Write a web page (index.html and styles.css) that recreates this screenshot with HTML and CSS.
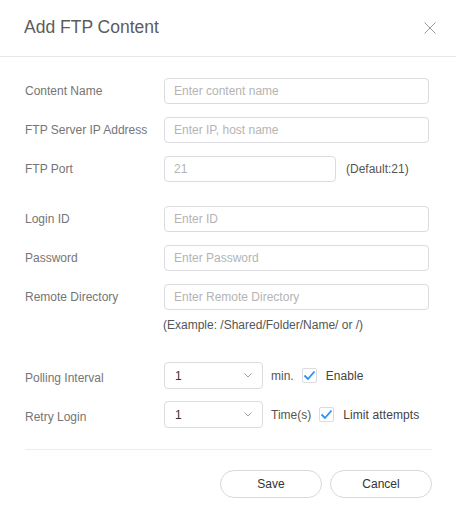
FILE: index.html
```html
<!DOCTYPE html>
<html>
<head>
<meta charset="utf-8">
<link rel="stylesheet" href="styles.css">
</head>
<body>
<div class="dialog">
  <div class="header">
    <div class="title">Add FTP Content</div>
    <svg class="close" width="12" height="12" viewBox="0 0 12 12"><path d="M0.5 0.5 L11.5 11.5 M11.5 0.5 L0.5 11.5" stroke="#9a9a9a" stroke-width="1" fill="none"/></svg>
  </div>
  <div class="form">
    <div class="group">
      <label class="label">Content Name</label>
      <input class="input" placeholder="Enter content name">
      <label class="label">FTP Server IP Address</label>
      <input class="input" placeholder="Enter IP, host name">
      <label class="label">FTP Port</label>
      <div class="inline">
        <input class="input port" placeholder="21">
        <span class="note">(Default:21)</span>
      </div>
    </div>
    <div class="group g2">
      <label class="label">Login ID</label>
      <input class="input" placeholder="Enter ID">
      <label class="label">Password</label>
      <input class="input" placeholder="Enter Password">
      <label class="label">Remote Directory</label>
      <input class="input" placeholder="Enter Remote Directory">
      <span></span>
      <div class="hint">(Example: /Shared/Folder/Name/ or /)</div>
    </div>
    <div class="group g3">
      <label class="label low">Polling Interval</label>
      <div class="inline">
        <div class="select"><span>1</span><svg width="8" height="5" viewBox="0 0 8 5"><path d="M0.5 0.5 L4 4 L7.5 0.5" stroke="#a0a0a0" fill="none" stroke-width="1"/></svg></div>
        <span class="unit">min.</span>
        <span class="check"><svg width="13" height="11" viewBox="0 0 13 11"><path d="M1.5 5.5 L5 9 L11.5 1.5" stroke="#2f8ff5" stroke-width="1.8" fill="none"/></svg></span>
        <span class="cklabel">Enable</span>
      </div>
      <label class="label low">Retry Login</label>
      <div class="inline">
        <div class="select"><span>1</span><svg width="8" height="5" viewBox="0 0 8 5"><path d="M0.5 0.5 L4 4 L7.5 0.5" stroke="#a0a0a0" fill="none" stroke-width="1"/></svg></div>
        <span class="unit">Time(s)</span>
        <span class="check"><svg width="13" height="11" viewBox="0 0 13 11"><path d="M1.5 5.5 L5 9 L11.5 1.5" stroke="#2f8ff5" stroke-width="1.8" fill="none"/></svg></span>
        <span class="cklabel">Limit attempts</span>
      </div>
    </div>
    <div class="footer">
      <button class="btn">Save</button>
      <button class="btn">Cancel</button>
    </div>
  </div>
</div>
</body>
</html>
```

FILE: styles.css
```css
* { box-sizing: border-box; }
body {
  margin: 0;
  width: 456px;
  height: 516px;
  background: #fff;
  font-family: "Liberation Sans", Arial, sans-serif;
  font-size: 12px;
  color: #666;
}
.dialog { width: 456px; }
.header {
  height: 57px;
  border-bottom: 1px solid #e8e8ec;
  display: flex;
  align-items: center;
  justify-content: space-between;
  padding: 0 20px 0 24px;
}
.title {
  font-size: 17.5px;
  color: #5c5c5c;
  padding-bottom: 1px;
}
.close { display: block; }
.form { padding: 21px 24px 0 25px; }
.group {
  display: grid;
  grid-template-columns: 139px 265px;
  row-gap: 13px;
  align-items: center;
}
.g2 { margin-top: 24px; }
.g3 { margin-top: 29px; row-gap: 12px; }
.label { color: #757575; }
.label.low { padding-top: 5px; }
.input {
  height: 26px;
  width: 265px;
  border: 1px solid #dcdce0;
  border-radius: 4px;
  padding: 0 9px;
  font-family: "Liberation Sans", Arial, sans-serif;
  font-size: 12px;
  color: #333;
  outline: none;
  margin: 0;
}
.input::placeholder { color: #b4b4b4; }
.input.port { width: 172px; }
.inline { display: flex; align-items: center; }
.note { margin-left: 10px; color: #555; }
.hint {
  margin-top: -6px;
  line-height: 16px;
  color: #555;
  margin-left: -1px;
}
.select {
  width: 99px;
  height: 27px;
  border: 1px solid #dcdce0;
  border-radius: 4px;
  display: flex;
  align-items: center;
  justify-content: space-between;
  padding: 0 10px 0 10px;
  color: #333;
}
.select svg { display: block; }
.unit { margin-left: 8px; color: #555; }
.check {
  margin-left: 8px;
  width: 15px;
  height: 15px;
  border: 1px solid #dcdce0;
  border-radius: 2px;
  display: flex;
  align-items: center;
  justify-content: center;
}
.check svg { display: block; }
.cklabel { margin-left: 9px; color: #444; letter-spacing: 0.1px; }
.footer {
  margin-top: 21px;
  border-top: 1px solid #ececf0;
  padding-top: 20px;
  display: flex;
  justify-content: flex-end;
  gap: 8px;
}
.btn {
  width: 102px;
  height: 28px;
  border: 1px solid #d8d8de;
  border-radius: 14px;
  background: #fff;
  font-family: "Liberation Sans", Arial, sans-serif;
  font-size: 12px;
  color: #333;
  padding: 0;
}
```
